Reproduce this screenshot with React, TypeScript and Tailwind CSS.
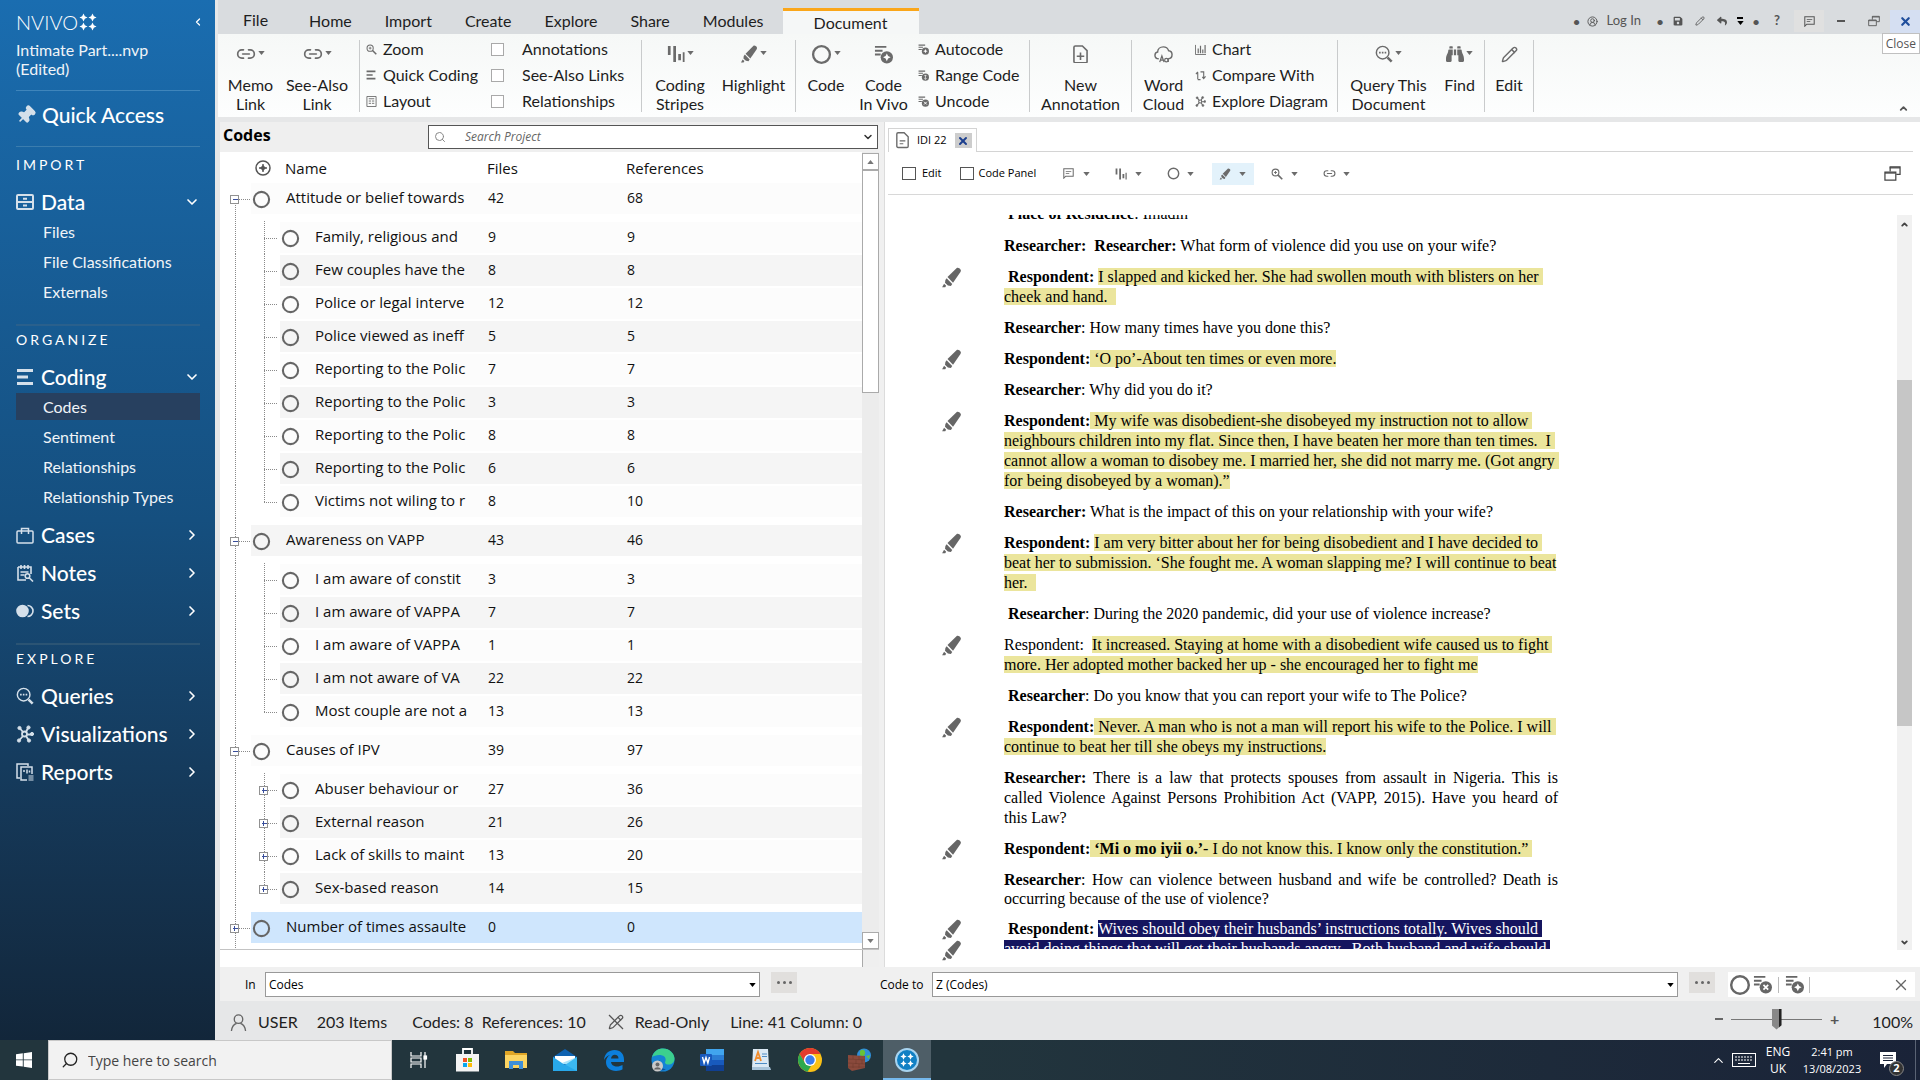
import React, { useState } from 'react';
import { ChevronDown, ChevronLeft, ChevronRight, ChevronUp, Link2, Search, X, Pin, Pencil, CircleUserRound } from 'lucide-react';
import { FaBinoculars, FaSave, FaReply } from 'react-icons/fa';
import clsx from 'clsx';

type IconProps = { className?: string };

const LATO = "font-['Lato','Liberation_Sans',sans-serif]";
const SEGOE = "font-['Open_Sans','Liberation_Sans',sans-serif]";

/* ---------- icons ---------- */

const Marker = ({ className }: IconProps) => (
  <svg viewBox="0 0 22 22" className={className} fill="currentColor">
    <path d="M16.500 1c1.200-.9 4.300.8 4.300 2.600 0 .8-.2 1.300-.6 1.900L12.600 16.600 6.800 10.600z" />
    <path d="M5.900 11.700l5.900 6-1.400 2.300-3.200-.7-3-2.800.4-3z" />
    <path d="M3.200 17.600l2.200 2-1 1.700H1.200z" />
  </svg>
);

const Stripes = ({ className }: IconProps) => (
  <svg viewBox="0 0 20 20" className={className} fill="currentColor">
    <path d="M1 1h3v10H1zM7 1h3v18H7zM12.500 10h3v7h-3zM17.500 8h2v11h-2z" />
  </svg>
);

const Lines = ({ className }: IconProps) => (
  <svg viewBox="0 0 18 18" className={className} fill="currentColor">
    <path d="M1 1h16v3H1zM1 7.500h11v3H1zM1 14h16v3H1z" />
  </svg>
);

const CodeBadge = ({ className, kind = 'add' }: IconProps & { kind?: 'add' | 'remove' | 'range' }) => (
  <svg viewBox="0 0 20 20" className={className} fill="currentColor">
    <path d="M1 1h12v2H1zM1 5h8v2H1zM1 9h6v2H1z" />
    <circle cx="13.500" cy="13" r="6.500" />
    {kind === 'add' && <path d="M13.500 9l1.300 2.700 2.700 1.300-2.700 1.300-1.300 2.700-1.300-2.700L9.500 13l2.700-1.300z" fill="#fff" />}
    {kind === 'remove' && <path d="M11 10.500l5 5m0-5l-5 5" stroke="#fff" strokeWidth="1.800" />}
    {kind === 'range' && <path d="M13.500 9v8M11.500 11l2-2 2 2M11.500 15l2 2 2-2" stroke="#fff" strokeWidth="1.200" fill="none" />}
  </svg>
);

const Ring = ({ className }: IconProps) => (
  <svg viewBox="0 0 20 20" className={className} fill="none" stroke="currentColor" strokeWidth="2.200">
    <circle cx="10" cy="10" r="8" />
  </svg>
);

const QueryGlass = ({ className }: IconProps) => (
  <svg viewBox="0 0 20 20" className={className} fill="none" stroke="currentColor" strokeWidth="1.600">
    <circle cx="8.500" cy="8.500" r="7" />
    <path d="M14 14l4.500 4.500" strokeWidth="2.800" />
    <path d="M4.500 8.500h1.800M7.600 8.500h1.800M10.700 8.500h1.800" strokeWidth="1.800" />
  </svg>
);

const ZoomIn = ({ className }: IconProps) => (
  <svg viewBox="0 0 16 16" className={className} fill="none" stroke="currentColor" strokeWidth="1.500">
    <circle cx="6" cy="6" r="4.500" />
    <path d="M9.500 9.500l5.500 5.500" strokeWidth="2.200" />
    <path d="M6 4v4M4 6h4" strokeWidth="1.200" />
  </svg>
);

const Page = ({ className, plus }: IconProps & { plus?: boolean }) => (
  <svg viewBox="0 0 16 20" className={className} fill="none" stroke="currentColor" strokeWidth="1.700">
    <path d="M2.500 1h7.500l5 5v11.500c0 .8-.6 1.500-1.500 1.500h-11C1.600 19 1 18.300 1 17.500v-15C1 1.700 1.600 1 2.500 1z" />
    {plus ? <path d="M8 8v8M4 12h8" /> : <path d="M4.500 11h7M4.500 14.500h4.500" strokeWidth="1.400" />}
  </svg>
);

const Layers = ({ className }: IconProps) => (
  <svg viewBox="0 0 12 12" className={className} fill="none" stroke="currentColor" strokeWidth="1">
    <path d="M1 .5h10v11H1zM3 3h6M3 5.500h2.500M6.500 5.500H9M3 8h2.500M6.500 8H9" />
  </svg>
);

const Cloud = ({ className }: IconProps) => (
  <svg viewBox="0 0 20 20" className={className} fill="none" stroke="currentColor" strokeWidth="1.500">
    <path d="M5 14.500C2.500 14.500 1 12.800 1 10.800 1 9 2.200 7.700 3.800 7.400 4 4.300 6.600 2 9.700 2c2.700 0 4.900 1.600 5.700 4 2.100.2 3.600 2 3.600 4.100 0 2.400-1.600 4.400-4 4.400" />
    <path d="M6 18l2.300-6.500L10.600 18M6.800 16h3" strokeWidth="1.300" />
    <circle cx="13" cy="16" r="1.800" strokeWidth="1.300" />
    <path d="M15 14v4" strokeWidth="1.300" />
  </svg>
);

const ChartBars = ({ className }: IconProps) => (
  <svg viewBox="0 0 12 12" className={className} fill="none" stroke="currentColor">
    <path d="M.5 1v10.500H12" />
    <path d="M3.500 10V5M6 10V2M8.500 10V6M11 10V1" strokeWidth="1.300" />
  </svg>
);

const Compare = ({ className }: IconProps) => (
  <svg viewBox="0 0 12 12" className={className} fill="none" stroke="currentColor" strokeWidth="1.200">
    <path d="M3 10V2.500M1 4.500l2-2.500M6 2h3.500v7M11.500 7l-2 2.500L8 7.500M3 10.500h3" />
  </svg>
);

const Graph = ({ className }: IconProps) => (
  <svg viewBox="0 0 18 18" className={className} fill="currentColor" stroke="currentColor">
    <circle cx="8.500" cy="9" r="2.500" fill="none" strokeWidth="1.800" />
    <path d="M4 3.500l3 3.500M12 3l-2 4M11 9.500h4M7 11l-3.500 4M10 11l2.500 4" strokeWidth="1.800" />
    <circle cx="3.500" cy="3" r="1.600" /><circle cx="12.500" cy="2.500" r="1.600" /><circle cx="16" cy="9" r="1.600" />
    <circle cx="3" cy="15.500" r="1.600" /><circle cx="13" cy="15.500" r="1.600" />
  </svg>
);

const Restore = ({ className }: IconProps) => (
  <svg viewBox="0 0 18 18" className={className} fill="none" stroke="currentColor" strokeWidth="1.300">
    <path d="M6.500 7V2h10.500v8h-4" /><path d="M6 3h11" /><path d="M1 7.500h11.500v8.500H1z" /><path d="M1 8.500h11" />
  </svg>
);

const Comment = ({ className }: IconProps) => (
  <svg viewBox="0 0 14 14" className={className} fill="none" stroke="currentColor" strokeWidth="1.300">
    <path d="M1 13V1h12v9.500H3.500z" /><path d="M3.500 4.500h7M3.500 7h4.500" strokeWidth="1" />
  </svg>
);

const Cabinet = ({ className }: IconProps) => (
  <svg viewBox="0 0 18 16" className={className} fill="none" stroke="currentColor" strokeWidth="2">
    <rect x="1" y="1" width="16" height="14" rx="1" /><path d="M1 8h16M7 4.800h4M7 11.500h4" />
  </svg>
);

const CaseIcon = ({ className }: IconProps) => (
  <svg viewBox="0 0 18 17" className={className} fill="none" stroke="currentColor" strokeWidth="1.500">
    <rect x="1" y="4" width="16" height="12" rx="1" /><path d="M5.500 7V1.500h7V7" />
  </svg>
);

const NotesIcon = ({ className }: IconProps) => (
  <svg viewBox="0 0 18 18" className={className} fill="none" stroke="currentColor" strokeWidth="1.600">
    <path d="M2 3h13v7M2 3v13h8M5 1v4M8.500 1v4M12 1v4M4.500 8h8M4.500 11h4" /><circle cx="11.500" cy="12" r="2.300" /><path d="M13.200 13.700L17 17.500" />
  </svg>
);

const SetsIcon = ({ className }: IconProps) => (
  <svg viewBox="0 0 18 14" className={className} fill="none" stroke="currentColor" strokeWidth="1.600">
    <circle cx="6.500" cy="7" r="5.500" fill="currentColor" /><path d="M11.500 1.500a5.500 5.500 0 010 11" />
  </svg>
);

const ReportsIcon = ({ className }: IconProps) => (
  <svg viewBox="0 0 18 18" className={className} fill="none" stroke="currentColor" strokeWidth="1.500">
    <path d="M4 15H1V1h11v2" /><path d="M11 17H5V4h11v7" /><path d="M8 7v2M11 6.500v4M13.500 7.500v2" /><path d="M12.500 13h5M12.500 15h5M12.500 17h5" strokeWidth="1.200" />
  </svg>
);

const Person = ({ className }: IconProps) => (
  <svg viewBox="0 0 18 18" className={className} fill="none" stroke="currentColor" strokeWidth="1.400">
    <circle cx="9" cy="5.500" r="4.500" /><path d="M1.500 18c.5-4.500 2.500-7 5.500-8M16.500 18c-.5-4.500-2.500-7-5.500-8" />
  </svg>
);

const Stars = ({ className }: IconProps) => (
  <svg viewBox="0 0 20 20" className={className} fill="currentColor">
    {[[5, 5], [15, 5], [5, 15], [15, 15]].map(([x, y]) => (
      <path key={`${x}-${y}`} d={`M${x} ${y - 4.5}l1.500 3 3 1.500-3 1.500-1.500 3-1.500-3-3-1.500 3-1.500z`} />
    ))}
  </svg>
);

const Caret = ({ className }: IconProps) => (
  <svg viewBox="0 0 8 5" className={clsx('w-[7px] h-[4px]', className)} fill="currentColor"><path d="M0 0h8L4 5z" /></svg>
);

/* ---------- sidebar ---------- */

const SideItem = ({ icon, label, open, children }: { icon: React.ReactNode; label: string; open?: boolean; children?: React.ReactNode }) => (
  <li className="mb-2">
    <button className="flex h-[30px] w-full items-center text-left text-[21px] font-medium text-white">
      <span className="flex w-[25px] text-[#d5e0ea]">{icon}</span>
      <span className="flex-1">{label}</span>
      {open ? <ChevronDown className="w-4 h-4" strokeWidth={2.5} /> : <ChevronRight className="w-4 h-4" strokeWidth={2.5} />}
    </button>
    {children && <ul>{children}</ul>}
  </li>
);

const SubItem = ({ label, active }: { label: string; active?: boolean }) => (
  <li className="h-[30px] py-px">
    <a href="#" className={clsx('flex h-[27px] items-center pl-[27px] text-[16px] text-[#f0f4f8]', active && 'bg-[#27405f]')}>{label}</a>
  </li>
);

const Section = ({ title, children }: { title: string; children: React.ReactNode }) => (
  <section>
    <h2 className="mb-[11px] h-[22px] text-[14px] leading-[22px] tracking-[3px] text-white">{title}</h2>
    <ul>{children}</ul>
  </section>
);

const Sidebar = () => (
  <nav className={clsx(LATO, 'w-[215px] shrink-0 bg-linear-to-b from-[#1a6db0] via-[#154f7f] to-[#12263a] pl-[16px] pr-[15px]')}>
    <div className="-mr-1 flex h-[40px] items-center pt-[4px] text-white">
      <span className="text-[20px] font-light">NVIVO</span>
      <Stars className="ml-px h-[18px] w-[18px]" />
      <button className="ml-auto" aria-label="Collapse"><ChevronLeft className="h-3 w-3" strokeWidth={2.500} /></button>
    </div>
    <div className="h-[50px] text-[16px] leading-[19px] text-[#f0f4f8]">Intimate Part....nvp<br />(Edited)</div>
    <div className="border-t border-[#3f85bb] pt-[5px] pb-[13px]">
      <a href="#" className="flex h-[37px] items-center text-[21px] font-medium text-white">
        <Pin className="w-[20px] h-[20px] mr-[6px] rotate-45 text-[#d5e0ea]" fill="currentColor" />Quick Access
      </a>
    </div>
    <div className="border-t border-[#3b7dae] pt-[7px]">
      <Section title="IMPORT">
        <SideItem icon={<Cabinet className="w-[18px]" />} label="Data" open>
          <SubItem label="Files" />
          <SubItem label="File Classifications" />
          <SubItem label="Externals" />
        </SideItem>
      </Section>
    </div>
    <div className="mt-[17px] border-t-2 border-[#2a608c] pt-[3px]">
      <Section title="ORGANIZE">
        <SideItem icon={<Lines className="w-[18px]" />} label="Coding" open>
          <SubItem label="Codes" active />
          <SubItem label="Sentiment" />
          <SubItem label="Relationships" />
          <SubItem label="Relationship Types" />
        </SideItem>
        <SideItem icon={<CaseIcon className="w-[18px]" />} label="Cases" />
        <SideItem icon={<NotesIcon className="w-[18px]" />} label="Notes" />
        <SideItem icon={<SetsIcon className="w-[18px]" />} label="Sets" />
      </Section>
    </div>
    <div className="mt-[17px] border-t-2 border-[#2b5474] pt-[3px]">
      <Section title="EXPLORE">
        <SideItem icon={<QueryGlass className="w-[18px]" />} label="Queries" />
        <SideItem icon={<Graph className="w-[18px]" />} label="Visualizations" />
        <SideItem icon={<ReportsIcon className="w-[18px]" />} label="Reports" />
      </Section>
    </div>
  </nav>
);

/* ---------- ribbon ---------- */

const BigButton = ({ icon, lines, caret, className }: { icon: React.ReactNode; lines: string[]; caret?: boolean; className: string }) => (
  <button className={clsx('flex flex-col items-center text-[16px] leading-[19px]', className)}>
    <span className="flex h-[41px] items-center gap-[2px] pb-px text-[#6b6b6b]">{icon}{caret && <Caret className="-mt-[2px]" />}</span>
    {lines.map(l => <span key={l} className="whitespace-nowrap">{l}</span>)}
  </button>
);

const SmallButton = ({ icon, label }: { icon: React.ReactNode; label: string }) => (
  <button className="flex h-[26px] items-center text-[16px] whitespace-nowrap"><span className="flex w-[17px] text-[#6b6b6b]">{icon}</span>{label}</button>
);

const Divider = () => <div className="mt-[6px] h-[72px] w-px bg-[#c9cbcc]" />;

const TABS = ['Home', 'Import', 'Create', 'Explore', 'Share', 'Modules'];

const Ribbon = () => (
  <header className={clsx(LATO, 'text-[#1e1e1e]')}>
    <div className="flex h-[34px] bg-[#d9dcdf]">
      <nav className="flex items-center gap-px pl-[9px] pt-[8px] text-[16px]">
        <button className="h-full pl-4 pr-[24px] pb-[2px]">File</button>
        {TABS.map(t => <button key={t} className="h-full px-4">{t}</button>)}
        <button className="ml-[2px] h-full w-[136px] border-t-3 border-[#faa61a] bg-[#f5f7f7]">Document</button>
      </nav>
      <div className="ml-auto flex items-center pt-[8px] text-[#555]">
        <span className="w-[14px] text-[14px]">•</span>
        <CircleUserRound className="w-[11px] h-[11px] mr-[9px]" />
        <button className="mr-[15px] text-[13px]">Log In</button>
        <span className="w-[11px] text-[14px]">•</span>
        <button className="flex w-[22px] justify-center" aria-label="Save"><FaSave className="w-[10px] h-[10px]" /></button>
        <button className="flex w-[22px] justify-center" aria-label="Edit"><Pencil className="w-[10px] h-[10px]" /></button>
        <button className="flex w-[22px] justify-center" aria-label="Undo"><FaReply className="w-[10px] h-[10px]" /></button>
        <button className="flex w-[19px] flex-col gap-[2px] pl-[4px] text-black" aria-label="Customize"><span className="w-[6px] h-[2px] bg-black" /><Caret className="w-[6px] h-[4px]" /></button>
        <span className="w-[8px] text-[14px]">•</span>
        <button className="w-[34px] text-[13px] font-bold">?</button>
        <button className="flex h-[22px] w-[30px] items-center justify-center bg-[#e0e0e0]" aria-label="Feedback"><Comment className="w-[11px] h-[11px]" /></button>
        <button className="flex h-[22px] w-[33px] items-center justify-center" aria-label="Minimize"><span className="h-[2px] w-[8px] bg-[#555]" /></button>
        <button className="flex h-[22px] w-[33px] items-center justify-center" aria-label="Restore"><Restore className="w-[12px] h-[12px]" /></button>
        <div className="relative">
          <button className="flex h-[23px] w-[30px] items-center justify-center bg-[#d5dff2] text-[#1f4e9c]" aria-label="Close window"><X className="w-[13px] h-[13px]" strokeWidth={4} /></button>
          <div className={clsx(SEGOE, 'absolute right-0 top-[23px] z-10 border border-[#c0c0c0] bg-white px-[3px] text-[12px] leading-[19px] text-[#555]')}>Close</div>
        </div>
      </div>
    </div>

    <div className="flex h-[88px] border-b-5 border-[#e6e7e8] bg-linear-to-b from-[#f6f8f7] to-[#fdfefe]">
      <BigButton className="w-[65px]" icon={<Link2 className="w-[20px] h-[20px]" />} lines={['Memo', 'Link']} caret />
      <BigButton className="w-[68px] mr-[8px]" icon={<Link2 className="w-[20px] h-[20px]" />} lines={['See-Also', 'Link']} caret />
      <Divider />
      <div className="w-[125px] pl-[6px] pt-[2px]">
        <SmallButton icon={<ZoomIn className="w-[11px]" />} label="Zoom" />
        <SmallButton icon={<Lines className="w-[10px]" />} label="Quick Coding" />
        <SmallButton icon={<Layers className="w-[11px]" />} label="Layout" />
      </div>
      <div className="w-[156px] pl-[6px] pt-[2px]">
        {['Annotations', 'See-Also Links', 'Relationships'].map(l => (
          <label key={l} className="flex h-[26px] items-center text-[16px] whitespace-nowrap">
            <input type="checkbox" className="mr-[18px] h-[13px] w-[13px] appearance-none border border-[#a9a9a9] bg-white" />{l}
          </label>
        ))}
      </div>
      <Divider />
      <BigButton className="w-[76px]" icon={<Stripes className="w-[18px]" />} lines={['Coding', 'Stripes']} caret />
      <BigButton className="w-[71px] mr-[6px]" icon={<Marker className="w-[18px]" />} lines={['Highlight']} caret />
      <Divider />
      <BigButton className="w-[60px]" icon={<Ring className="w-[21px]" />} lines={['Code']} caret />
      <BigButton className="w-[55px]" icon={<CodeBadge className="w-[19px]" />} lines={['Code', 'In Vivo']} />
      <div className="w-[118px] pl-[7px] pt-[2px]">
        <SmallButton icon={<CodeBadge className="w-[11px]" />} label="Autocode" />
        <SmallButton icon={<CodeBadge kind="range" className="w-[11px]" />} label="Range Code" />
        <SmallButton icon={<CodeBadge kind="remove" className="w-[11px]" />} label="Uncode" />
      </div>
      <Divider />
      <BigButton className="w-[101px]" icon={<Page plus className="w-[15px]" />} lines={['New', 'Annotation']} />
      <Divider />
      <BigButton className="w-[63px]" icon={<Cloud className="w-[19px]" />} lines={['Word', 'Cloud']} />
      <div className="w-[142px] pt-[2px]">
        <SmallButton icon={<ChartBars className="w-[11px]" />} label="Chart" />
        <SmallButton icon={<Compare className="w-[11px]" />} label="Compare With" />
        <SmallButton icon={<Graph className="w-[11px]" />} label="Explore Diagram" />
      </div>
      <Divider />
      <BigButton className="w-[101px]" icon={<QueryGlass className="w-[18px]" />} lines={['Query This', 'Document']} caret />
      <BigButton className="w-[41px] mr-[4px]" icon={<FaBinoculars className="w-[18px] h-[18px]" />} lines={['Find']} caret />
      <Divider />
      <BigButton className="w-[48px]" icon={<Pencil className="w-[17px] h-[17px]" />} lines={['Edit']} />
      <Divider />
      <button className="ml-auto mr-[11px] mb-[3px] self-end text-[#555]" aria-label="Collapse ribbon"><ChevronUp className="h-[11px] w-[11px]" strokeWidth={4} /></button>
    </div>
  </header>
);

/* ---------- codes tree ---------- */

type Row = { name: string; files: number; refs: number; expander?: '+' | '-'; level: 0 | 1; last?: boolean; shade?: boolean; selected?: boolean };

const ROWS: Row[] = [
  { name: 'Attitude or belief towards', files: 42, refs: 68, level: 0, expander: '-' },
  { name: 'Family, religious and', files: 9, refs: 9, level: 1 },
  { name: 'Few couples have the', files: 8, refs: 8, level: 1, shade: true },
  { name: 'Police or legal interve', files: 12, refs: 12, level: 1 },
  { name: 'Police viewed as ineff', files: 5, refs: 5, level: 1, shade: true },
  { name: 'Reporting to the Polic', files: 7, refs: 7, level: 1 },
  { name: 'Reporting to the Polic', files: 3, refs: 3, level: 1, shade: true },
  { name: 'Reporting to the Polic', files: 8, refs: 8, level: 1 },
  { name: 'Reporting to the Polic', files: 6, refs: 6, level: 1, shade: true },
  { name: 'Victims not wiling to r', files: 8, refs: 10, level: 1, last: true },
  { name: 'Awareness on VAPP', files: 43, refs: 46, level: 0, expander: '-', shade: true },
  { name: 'I am aware of constit', files: 3, refs: 3, level: 1 },
  { name: 'I am aware of VAPPA', files: 7, refs: 7, level: 1, shade: true },
  { name: 'I am aware of VAPPA', files: 1, refs: 1, level: 1 },
  { name: 'I am not aware of VA', files: 22, refs: 22, level: 1, shade: true },
  { name: 'Most couple are not a', files: 13, refs: 13, level: 1, last: true },
  { name: 'Causes of IPV', files: 39, refs: 97, level: 0, expander: '-' },
  { name: 'Abuser behaviour or', files: 27, refs: 36, level: 1, expander: '+' },
  { name: 'External reason', files: 21, refs: 26, level: 1, expander: '+', shade: true },
  { name: 'Lack of skills to maint', files: 13, refs: 20, level: 1, expander: '+' },
  { name: 'Sex-based reason', files: 14, refs: 15, level: 1, expander: '+', shade: true, last: true },
  { name: 'Number of times assaulte', files: 0, refs: 0, level: 0, expander: '+', selected: true },
];

const Branch = ({ row, first }: { row: Row; first: boolean }) => {
  const h = row.level === 0 ? 45 : 33;
  const mid = row.level === 0 ? 23 : 17;
  const x = row.level === 0 ? 14.5 : 43.5;
  return (
    <svg width={row.level === 0 ? 31 : 60} height={h} className="block shrink-0" fill="none" stroke="#8a8a8a" shapeRendering="crispEdges">
      <path d={`M15.500 ${first ? mid : 0}V${h}`} strokeDasharray="1 1" />
      {row.level === 1 && <path d={`M44.500 0V${row.last ? mid : h}`} strokeDasharray="1 1" />}
      <path d={`M${x} ${mid}.5H${row.level === 0 ? 30 : 58}`} strokeDasharray="1 1" />
      {row.expander && (
        <g>
          <rect x={x - 4} y={mid - 3.5} width="8" height="8" fill="#fff" stroke="#919191" />
          <path d={`M${x - 2} ${mid}.5h5`} stroke="#3a4f9c" />
          {row.expander === '+' && <path d={`M${x} ${mid - 2}v5`} stroke="#3a4f9c" />}
        </g>
      )}
    </svg>
  );
};

const CodesPanel = () => (
  <section className={clsx(SEGOE, 'flex w-[calc(39%+1px)] shrink-0 flex-col border-r-5 border-[#f0f0f0] bg-white text-[#111]')}>
    <div className="flex h-[30px] items-start bg-[#efefef] pt-[3px] pr-px">
      <h1 className="w-[208px] pl-[3px] text-[16px] leading-[20px] font-bold text-black">Codes</h1>
      <div className="flex h-[24px] flex-1 items-center border border-[#555] bg-white px-[5px]">
        <Search className="w-[12px] h-[12px] text-[#888]" />
        <input aria-label="Search Project" placeholder="Search Project" className="ml-[19px] flex-1 text-[12px] italic outline-none placeholder:text-[#666]" />
        <ChevronDown className="w-[12px] h-[12px] -mr-[2px] text-[#333]" strokeWidth={3} />
      </div>
    </div>
    <div className="flex min-h-0 flex-1 overflow-hidden border-b border-[#c3c3c3]">
      <table className="flex-1 table-fixed self-start border-collapse text-[14px]">
        <colgroup><col className="w-[267px]" /><col className="w-[139px]" /><col /></colgroup>
        <thead>
          <tr className="h-[24px] text-left text-[15px]">
            <th className="p-0 pt-2 font-normal leading-4">
              <div className="flex items-center pl-[35px]">
                <svg viewBox="0 0 16 16" className="mr-[14px] h-[16px] w-[16px]" fill="none" stroke="#555" strokeWidth="1.500"><circle cx="8" cy="8" r="7" /><path d="M8 4v8M4 8h8" strokeWidth="1.400" /><path d="M8 5l3 3-3 3-3-3z" fill="#555" stroke="none" /></svg>
                Name
              </div>
            </th>
            <th className="p-0 pt-2 font-normal leading-4">Files</th>
            <th className="p-0 pt-2 font-normal leading-4">References</th>
          </tr>
        </thead>
        <tbody>
          {ROWS.map((row, i) => {
            const bg = row.selected ? 'bg-[#cfe6fd]' : row.shade ? 'bg-[#f5f5f5]' : 'bg-[#fcfcfc]';
            return (
              <tr key={i}>
                <td className="p-0">
                  <div className="flex items-center">
                    <Branch row={row} first={i === 0} />
                    <div className={clsx('flex h-[31px] flex-1 items-center pb-[3px] text-[15px] whitespace-nowrap', bg)}>
                      <Ring className="mt-[4px] ml-px mr-[15px] h-[19px] w-[19px] text-[#666]" />
                      {row.name}
                    </div>
                  </div>
                </td>
                <td className="p-0"><div className={clsx('flex h-[31px] items-center pb-[3px] pl-px', bg)}>{row.files}</div></td>
                <td className="p-0"><div className={clsx('flex h-[31px] items-center pb-[3px] pl-px', bg)}>{row.refs}</div></td>
              </tr>
            );
          })}
        </tbody>
      </table>
      <div className="flex w-[17px] flex-col bg-[#ececec]">
        <div className="mt-px flex h-[17px] items-center justify-center border border-[#aaa] bg-white text-[#777]"><Caret className="rotate-180" /></div>
        <div className="h-[223px] border border-[#aaa] bg-white" />
        <div className="mt-auto flex h-[17px] items-center justify-center border border-[#aaa] bg-white text-[#777]"><Caret /></div>
      </div>
    </div>
    <div className="flex h-[17px] justify-end"><div className="w-[17px] border-l border-[#aaa] bg-[#efefef]" /></div>
  </section>
);

/* ---------- document ---------- */

const H = ({ children }: { children: React.ReactNode }) => <span className="bg-[#ebe59c]">{children}</span>;
const S = ({ children }: { children: React.ReactNode }) => <span className="bg-[#15155f] text-white">{children}</span>;

const Para = ({ lines, marks = 0, className }: { lines: React.ReactNode[]; marks?: number; className?: string }) => (
  <div className="mb-[11px] flex leading-[20px]">
    <div className="h-[20px] w-[63px] shrink-0 text-[#666]">
      {Array.from({ length: marks }, (_, i) => <Marker key={i} className="h-[21px] w-[21px]" />)}
    </div>
    <p className={clsx('flex-1', className)}>
      {lines.map((l, i) => <span key={i} className="block whitespace-pre">{l}</span>)}
    </p>
  </div>
);

const Plain = ({ children, className = 'leading-[20px]' }: { children: React.ReactNode; className?: string }) => (
  <p className={clsx('mb-[11px] ml-[63px] whitespace-pre-wrap', className)}>{children}</p>
);

const Transcript = () => (
  <article className="-mt-[11px] w-[617px] text-[16px] text-black font-['Liberation_Serif','Times_New_Roman',serif]">
    <p className="mb-[12px] ml-[63px] leading-[20px] whitespace-pre"> <b>Place of Residence</b>: Imadin</p>
    <Plain><b>Researcher:  Researcher:</b> What form of violence did you use on your wife?</Plain>
    <Para marks={1} lines={[<><b> Respondent:</b> <H>I slapped and kicked her. She had swollen mouth with blisters on her </H></>, <H>cheek and hand.  </H>]} />
    <Plain><b>Researcher</b>: How many times have you done this?</Plain>
    <Para marks={1} lines={[<><b>Respondent:</b><H> ‘O po’-About ten times or even more.</H></>]} />
    <Plain><b>Researcher</b>: Why did you do it?</Plain>
    <Para marks={1} lines={[
      <><b>Respondent:</b><H> My wife was disobedient-she disobeyed my instruction not to allow </H></>,
      <H>neighbours children into my flat. Since then, I have beaten her more than ten times.  I </H>,
      <H>cannot allow a woman to disobey me. I married her, she did not marry me. (Got angry </H>,
      <H>for being disobeyed by a woman).”</H>,
    ]} />
    <Plain><b>Researcher:</b> What is the impact of this on your relationship with your wife?</Plain>
    <Para marks={1} lines={[
      <><b>Respondent:</b> <H>I am very bitter about her for being disobedient and I have decided to </H></>,
      <H>beat her to submission. ‘She fought me. A woman slapping me? I will continue to beat</H>,
      <H>her.  </H>,
    ]} />
    <Plain> <b>Researcher</b>: During the 2020 pandemic, did your use of violence increase?</Plain>
    <Para marks={1} lines={[
      <>Respondent:  <H>It increased. Staying at home with a disobedient wife caused us to fight </H></>,
      <H>more. Her adopted mother backed her up - she encouraged her to fight me</H>,
    ]} />
    <Plain> <b>Researcher</b>: Do you know that you can report your wife to The Police?</Plain>
    <Para marks={1} lines={[
      <><b> Respondent:</b><H> Never. A man who is not a man will report his wife to the Police. I will </H></>,
      <H>continue to beat her till she obeys my instructions.</H>,
    ]} />
    <Plain className="leading-[20px] text-justify"><b>Researcher:</b> There is a law that protects spouses from assault in Nigeria. This is called Violence Against Persons Prohibition Act (VAPP, 2015). Have you heard of this{'\u00a0'}Law?</Plain>
    <Para marks={1} lines={[<><b>Respondent:</b><H> <b>‘Mi o mo iyii o.’</b>- I do not know this. I know only the constitution.” </H></>]} />
    <Plain className="leading-[19px] text-justify"><b>Researcher</b>: How can violence between husband and wife be controlled? Death is occurring because of the use of violence?</Plain>
    <Para marks={2} className="h-[30px] overflow-hidden" lines={[
      <><b> Respondent:</b> <S>Wives should obey their husbands’ instructions totally. Wives should </S></>,
      <S>avoid doing things that will get their husbands angry.  Both husband and wife should </S>,
    ]} />
  </article>
);

const DocTool = ({ icon, active, label }: { icon: React.ReactNode; active?: boolean; label: string }) => (
  <button aria-label={label} className={clsx('mr-[10px] flex h-[22px] w-[42px] items-center gap-[7px] pl-[7px] text-[#6b6b6b]', active && 'bg-[#e3f2fb]')}>
    <span className="flex w-[13px]">{icon}</span><Caret />
  </button>
);

const DocumentPanel = () => (
  <section className={clsx(SEGOE, 'flex min-w-0 flex-1 flex-col border-l border-[#dcdcdc] bg-white pl-[3px] text-[11px]')}>
    <div className="flex h-[30px] items-end pr-[7px]">
      <div className="flex h-[24px] items-center border border-b-0 border-[#d4d4d4] pl-[7px] pr-[4px]">
        <Page className="w-[13px] text-[#6b6b6b]" />
        <span className="mx-[8px]">IDI 22</span>
        <button className="flex h-[15px] w-[17px] items-center justify-center bg-[#cdcdcd] text-[#1c3f8e]" aria-label="Close tab"><X className="w-[12px] h-[12px]" strokeWidth={4} /></button>
      </div>
      <div className="flex-1 self-stretch border-b border-[#d4d4d4]" />
    </div>
    <div className="mr-[7px] flex h-[43px] items-center border-b border-[#d8d8d8] pt-px pl-[14px]">
      <label className="mr-[18px] flex items-center"><input type="checkbox" className="mr-[6px] h-[13px] w-[14px] appearance-none border border-[#555]" />Edit</label>
      <label className="mr-[20px] flex items-center"><input type="checkbox" className="mr-[5px] h-[13px] w-[14px] appearance-none border border-[#555]" />Code Panel</label>
      <DocTool label="Annotations" icon={<Comment className="w-[11px]" />} />
      <DocTool label="Stripes" icon={<Stripes className="w-[12px]" />} />
      <DocTool label="Code" icon={<Ring className="w-[13px]" />} />
      <DocTool label="Highlight" icon={<Marker className="w-[12px]" />} active />
      <DocTool label="Zoom" icon={<ZoomIn className="w-[12px]" />} />
      <DocTool label="Links" icon={<Link2 className="w-[13px] h-[13px]" />} />
      <button className="ml-auto mr-[12px] text-[#444]" aria-label="Undock"><Restore className="h-[17px] w-[17px]" /></button>
    </div>
    <div className="mt-[20px] flex min-h-0 flex-1">
      <div className="min-w-0 flex-1 overflow-hidden pl-[53px]"><Transcript /></div>
      <div className="mb-[17px] mr-[8px] flex w-[15px] flex-col items-center bg-[#f1f1f1] text-[#444]">
        <ChevronUp className="mt-[5px] h-[9px] w-[9px] shrink-0" strokeWidth={5} />
        <div className="mt-[151px] h-[346px] w-full bg-[#c6c6c6]" />
        <ChevronDown className="mt-auto mb-[3px] h-[9px] w-[9px] shrink-0" strokeWidth={5} />
      </div>
    </div>
  </section>
);

/* ---------- bottom bars ---------- */

const Combo = ({ label, value, className }: { label: string; value: string; className?: string }) => (
  <div className={clsx('relative', className)}>
    <select aria-label={label} className="h-[25px] w-full appearance-none border border-[#999] bg-white pl-[3px] text-[12px] text-black"><option>{value}</option></select>
    <Caret className="pointer-events-none absolute right-[4px] top-[11px] h-[3px] w-[5px]" />
  </div>
);

const Dots = () => <button aria-label="Browse" className="flex h-[21px] w-[26px] items-center justify-center gap-[3px] bg-[#e1dfdd]">{[0, 1, 2].map(i => <span key={i} className="h-[3px] w-[3px] rounded-full bg-[#666]" />)}</button>;

const CodingBar = () => (
  <div className={clsx(SEGOE, 'flex h-[34px] items-start bg-[#f0f0f0] pt-[5px] text-[12px] text-black')}>
    <span className="w-[45px] pl-[25px] leading-[25px]">In</span>
    <Combo label="In" value="Codes" className="w-[495px]" />
    <div className="ml-[11px]"><Dots /></div>
    <span className="ml-[83px] mr-[9px] w-[43px] leading-[25px] whitespace-nowrap">Code to</span>
    <Combo label="Code to" value="Z (Codes)" className="flex-1" />
    <div className="ml-[11px]"><Dots /></div>
    <div className="ml-[13px] mr-[5px] flex h-[25px] w-[187px] items-center bg-white text-[#666]">
      <Ring className="ml-[1px] h-[22px] w-[22px]" />
      <CodeBadge kind="remove" className="ml-[2px] w-[19px]" />
      <span className="mx-[6px] h-[16px] w-px bg-[#bbb]" />
      <CodeBadge className="w-[19px]" />
      <span className="ml-[5px] h-[16px] w-px bg-[#bbb]" />
      <button className="ml-auto mr-[5px]" aria-label="Close bar"><X className="w-[18px] h-[18px]" strokeWidth={1.800} /></button>
    </div>
  </div>
);

const StatusBar = () => {
  const [zoom, setZoom] = useState(50);
  return (
    <footer className={clsx(LATO, 'flex h-[39px] items-center bg-[#e6e7e8] pt-[3px] text-[16px] whitespace-pre text-[#222]')}>
      <Person className="ml-[10px] mr-[11px] h-[17px] w-[17px] text-[#666]" />
      <span className="mr-[19px]">USER</span>
      <span className="mr-[25px]">203 Items</span>
      <span className="mr-[22px]">Codes: 8  References: 10</span>
      <span className="relative mr-[11px] text-[#555]">
        <Pencil className="h-[16px] w-[16px]" strokeWidth={1.800} />
        <svg viewBox="0 0 16 16" className="absolute left-0 top-0 h-[16px] w-[16px]" stroke="currentColor" strokeWidth="1.300"><path d="M1 1l14 14" /></svg>
      </span>
      <span className="mr-[21px]">Read-Only</span>
      <span>Line: 41 Column: 0</span>
      <div className="ml-auto flex items-center text-[#555] -mt-[6px]">
        <span className="h-[2px] w-[8px] bg-[#666]" />
        <input
          type="range" aria-label="Zoom" value={zoom} onChange={e => setZoom(Number(e.target.value))}
          className="mx-[8px] h-[22px] w-[91px] appearance-none bg-[linear-gradient(#777,#777)] bg-[length:100%_1px] bg-center bg-no-repeat [&::-webkit-slider-thumb]:h-[21px] [&::-webkit-slider-thumb]:w-[10px] [&::-webkit-slider-thumb]:appearance-none [&::-webkit-slider-thumb]:bg-[linear-gradient(to_right,#888_70%,#222_70%)] [&::-webkit-slider-thumb]:[clip-path:polygon(0_0,100%_0,100%_80%,50%_100%,0_80%)]"
        />
        <span className="text-[16px] leading-[16px] font-bold">+</span>
      </div>
      <span className="ml-[33px] mr-[7px]">100%</span>
    </footer>
  );
};

/* ---------- windows taskbar ---------- */

const TASK_ICONS: { name: string; node: React.ReactNode }[] = [
  { name: 'Task View', node: <g stroke="#fff" fill="none" strokeWidth="1.200"><path d="M5 4v4h10V4M5 20v-4h10v4M5 10h10v4H5zM19 4v16" /><rect x="18" y="8" width="2.500" height="3" fill="#fff" /></g> },
  { name: 'Store', node: <g><path d="M8 6V1h9v5" fill="none" stroke="#fff" strokeWidth="1.800" /><path d="M1 6h23v17.500H1z" fill="#f4f4f4" /><path d="M8 10h4v4H8z" fill="#f35325" /><path d="M13 10h4v4h-4z" fill="#81bc06" /><path d="M8 15h4v4H8z" fill="#05a6f0" /><path d="M13 15h4v4h-4z" fill="#ffba08" /></g> },
  { name: 'Explorer', node: <g><path d="M1 3h8l2 2h12v3H1z" fill="#e0a526" /><path d="M1 7h22v13H1z" fill="#fcd462" /><path d="M5 21v-8h14v8h-4v-4H9v4z" fill="#3f8fd8" /></g> },
  { name: 'Mail', node: <g><path d="M0 9l12-8 12 8v14H0z" fill="#0f62b0" /><path d="M2 8h20v8H2z" fill="#fff" /><path d="M0 9l12 8 12-8v14H0z" fill="#28a8ea" /><path d="M24 9v14L9 15z" fill="#50c8f5" opacity=".5" /></g> },
  { name: 'Edge Legacy', node: <path d="M2 12C2.500 5.500 7 2 12.500 2 18.500 2 22 6 22 11.500V14H9c.3 3 3 4.500 6 4.500 2 0 4-.6 5.500-1.500v4.300C19 22.300 16.500 23 14 23 8 23 4 19.500 4 14c0-3 1.500-5.500 4-7-3 .8-5 3-6 5zM9 10.500h7.500C16.500 8 15 6.800 12.800 6.800 10.800 6.800 9.300 8.300 9 10.500z" fill="#0c7fdc" /> },
  { name: 'Edge', node: <g><circle cx="12" cy="12" r="11.500" fill="#1483d4" /><path d="M1 9C3 3 7 .5 12 .5c6.500 0 11.500 5 11.500 10 0 4-3 6-6 6-3.500 0-4-2-3-3.500C15.500 9 12 7 8.500 7 5 7 2.500 8 1 9z" fill="#3ccf8e" /><path d="M9 12c-2 4 1 9 6 9.500-4 2-10 0-11-5z" fill="#0f4f9e" /><circle cx="6.500" cy="18" r="5.500" fill="#c9c9c9" /><circle cx="6.500" cy="16.500" r="2" fill="#666" /><path d="M3 21.500c1-3 6-3 7 0z" fill="#666" /></g> },
  { name: 'Word', node: <g><path d="M6 1h18v6H6z" fill="#41a5ee" /><path d="M6 7h18v5H6z" fill="#2b7cd3" /><path d="M6 12h18v5H6z" fill="#185abd" /><path d="M6 17h18v6H6z" fill="#103f91" /><rect y="6" width="12" height="12" rx="1" fill="#185abd" /><path d="M2.500 9l1.600 6L6 9.500 7.900 15l1.600-6" stroke="#fff" strokeWidth="1.400" fill="none" /></g> },
  { name: 'WordPad', node: <g><path d="M4 1h15l1 18H3z" fill="#dbe9f5" /><path d="M3 19h18l1 3H3z" fill="#a9c4da" /><path d="M6 13l3-9 3 9M7 10h4" stroke="#f08c2e" strokeWidth="1.800" fill="none" /><path d="M13 6h5M13 8.500h5M6 15.500h12" stroke="#4e8cc4" /></g> },
  { name: 'Chrome', node: <g><circle cx="12" cy="12" r="12" fill="#fbc116" /><path d="M1.600 6A12 12 0 0122.400 6H12l-5 9z" fill="#e33b2e" /><path d="M1.600 6L7 15l6 3-3.500 5.700A12 12 0 011.600 6z" fill="#2da94f" /><circle cx="12" cy="12" r="6" fill="#fff" /><circle cx="12" cy="12" r="4.700" fill="#3b7ded" /></g> },
  { name: 'Firewall', node: <g><circle cx="17" cy="7.500" r="7" fill="#2f8fd8" /><path d="M13 3c3-3 6 0 5 3s-4 3-5 1zM19 8l4-1-1 4z" fill="#67c23a" /><path d="M1 7l17 1v12L5 23 1 20z" fill="#8a4a3c" /><path d="M1 11l17 1M1 15l17 1M1 19l17 0M6 7v4M12 8v4M9 12v4M15 12v4M6 16v4M12 16v4" stroke="#6e3a2e" strokeWidth=".6" /></g> },
];

const Taskbar = () => (
  <div className={clsx(SEGOE, 'flex h-[40px] shrink-0 bg-linear-to-r from-[#22353d] from-50% to-[#1a2338] text-white')}>
    <button className="flex w-[48px] items-center justify-center" aria-label="Start">
      <svg viewBox="0 0 16 16" className="h-[16px] w-[16px]" fill="#fff"><path d="M0 2.300L6.800 1.300v6.200H0zM7.700 1.200L16 0v7.500H7.700zM0 8.300h6.800v6.300L0 13.700zM7.700 8.300H16V16l-8.300-1.200z" /></svg>
    </button>
    <label className="mr-px flex w-[344px] items-center border border-[#c8c8c8] bg-[#f2f2f2] pl-[12px]">
      <Search className="h-[18px] w-[18px] -scale-x-100 text-[#222]" strokeWidth={1.700} />
      <input aria-label="Search" placeholder="Type here to search" className="ml-[9px] flex-1 text-[14px] outline-none placeholder:text-[#444]" />
    </label>
    {TASK_ICONS.map(t => (
      <button key={t.name} aria-label={t.name} className="flex w-[49px] items-center justify-center"><svg viewBox="0 0 24 24" className="h-[24px] w-[24px]">{t.node}</svg></button>
    ))}
    <button className="flex w-[48px] items-center justify-center border-b-2 border-[#76b9ed] bg-[#4e5e67] pt-[2px]" aria-label="NVivo">
      <span className="flex h-[24px] w-[24px] items-center justify-center rounded-full border-2 border-[#a8d4f0] bg-[#1080c4]"><Stars className="h-[14px] w-[14px]" /></span>
    </button>
    <div className="ml-auto flex items-center text-[12px]">
      <ChevronUp className="mr-[6px] h-[15px] w-[15px]" strokeWidth={1.800} />
      <svg viewBox="0 0 24 14" className="h-[14px] w-[24px]" fill="none" stroke="#fff"><rect x=".5" y=".5" width="23" height="13" /><path d="M3 4h18M3 7h18" strokeDasharray="2 1" /><path d="M6 10.500h12" /></svg>
      <div className="ml-[6px] w-[32px] text-center leading-[17px]">ENG<br />UK</div>
      <div className="w-[76px] text-center text-[11px] leading-[17px]">2:41 pm<br />13/08/2023</div>
      <div className="relative ml-[9px] mr-[18px]">
        <svg viewBox="0 0 18 18" className="h-[18px] w-[18px]"><path d="M1 1h16v12H8l-3 4v-4H1z" fill="#fff" /><path d="M4 4.500h10M4 7h10M4 9.500h10" stroke="#1a2338" /></svg>
        <span className="absolute -bottom-[7px] -right-[7px] flex h-[15px] w-[15px] items-center justify-center rounded-full border border-[#888] bg-[#333] text-[11px] font-bold">2</span>
      </div>
      <span className="mr-[4px] h-[40px] w-px bg-[#5a6374]" />
    </div>
  </div>
);

const App: React.FC = () => (
  <div className="flex h-screen flex-col overflow-hidden bg-[#e6e7e8]">
    <div className="flex min-h-0 flex-1">
      <Sidebar />
      <main className="flex min-w-0 flex-1 flex-col border-l-3 border-[#e6e7e8]">
        <Ribbon />
        <div className="flex min-w-0 flex-1 flex-col pl-[2px] min-h-0">
          <div className="flex min-h-0 flex-1">
            <CodesPanel />
            <DocumentPanel />
          </div>
          <CodingBar />
          <StatusBar />
        </div>
      </main>
    </div>
    <Taskbar />
  </div>
);

export default App;
